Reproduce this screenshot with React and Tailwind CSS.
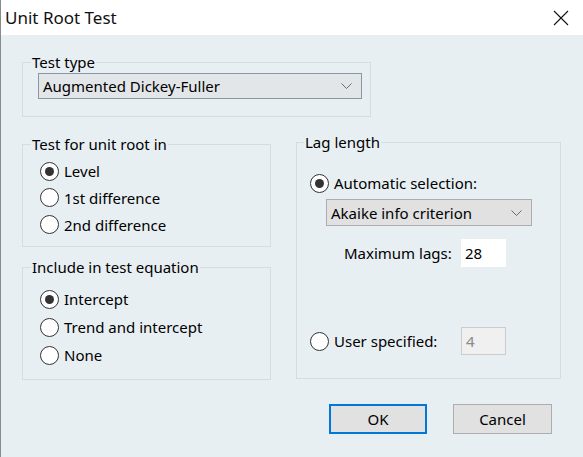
import React from "react";

function Radio({ checked }) {
  return (
    <span className="w-[19px] h-[19px] rounded-full border-[1.5px] border-[#333] bg-white flex items-center justify-center shrink-0">
      {checked && <span className="w-[9px] h-[9px] rounded-full bg-[#333]" />}
    </span>
  );
}

function Chevron() {
  return (
    <svg width="11" height="6" viewBox="0 0 11 6" className="shrink-0">
      <polyline points="0.5,0.5 5.5,5.5 10.5,0.5" fill="none" stroke="#6b6b6b" strokeWidth="1" />
    </svg>
  );
}

function RadioRow({ checked, label, h }) {
  return (
    <div className={`flex items-center gap-[5px] ${h}`}>
      <Radio checked={checked} />
      <span>{label}</span>
    </div>
  );
}

export default function App() {
  return (
    <div className="w-[583px] h-[457px] flex flex-col bg-[#e8eff3] border-l border-[#8a8a8a] font-['Noto_Sans',sans-serif] text-[15px] leading-[20px] text-black overflow-hidden">
      <div className="h-[35px] bg-white flex items-center justify-between pl-[4px] pr-[14px] shrink-0">
        <span className="text-[17px] leading-[24px] text-[#111]">Unit Root Test</span>
        <svg width="16" height="16" viewBox="0 0 16 16">
          <path d="M1 1 L15 15 M15 1 L1 15" stroke="#111" strokeWidth="1.1" fill="none" />
        </svg>
      </div>

      <div className="flex-1 flex flex-col pl-[21px] pt-[17px]">
        <fieldset className="w-[349px] h-[65px] border border-[#d6dde2]">
          <legend className="ml-[8px] px-[1px]">Test type</legend>
          <div className="pl-[15px] pt-[1px]">
            <div className="w-[324px] h-[26px] bg-[#e3e6e9] border border-[#8c97a3] flex items-center justify-between pl-[4px] pr-[9px]">
              <span>Augmented Dickey-Fuller</span>
              <Chevron />
            </div>
          </div>
        </fieldset>

        <div className="flex items-start gap-[25px] mt-[15px]">
          <div className="flex flex-col w-[249px] mt-[2px] gap-[10px]">
            <fieldset className="h-[113px] border border-[#d6dde2]">
              <legend className="ml-[8px] px-[1px]">Test for unit root in</legend>
              <div className="flex flex-col pl-[17px] pt-[4px]">
                <RadioRow checked label="Level" h="h-[26px]" />
                <RadioRow label="1st difference" h="h-[27px]" />
                <RadioRow label="2nd difference" h="h-[27px]" />
              </div>
            </fieldset>
            <fieldset className="h-[123px] border border-[#d6dde2]">
              <legend className="ml-[8px] px-[1px]">Include in test equation</legend>
              <div className="flex flex-col pl-[17px] pt-[8px]">
                <RadioRow checked label="Intercept" h="h-[28px]" />
                <RadioRow label="Trend and intercept" h="h-[28px]" />
                <RadioRow label="None" h="h-[28px]" />
              </div>
            </fieldset>
          </div>

          <fieldset className="w-[265px] h-[247px] border border-[#d6dde2]">
            <legend className="ml-[7px] px-[1px]">Lag length</legend>
            <div className="flex flex-col pl-[13px] pt-[18px]">
              <RadioRow checked label="Automatic selection:" h="h-[26px]" />
              <div className="pl-[16px] mt-[3px]">
                <div className="w-[206px] h-[27px] bg-[#e1e1e1] border border-[#adadad] flex items-center justify-between pl-[4px] pr-[9px]">
                  <span>Akaike info criterion</span>
                  <Chevron />
                </div>
              </div>
              <div className="flex items-center mt-[13px] pl-[34px] gap-[9px]">
                <span className="w-[108px]">Maximum lags:</span>
                <div className="w-[45px] h-[28px] bg-white flex items-center pl-[4px]">28</div>
              </div>
              <div className="flex items-center mt-[60px]">
                <div className="flex items-center gap-[5px] w-[151px]">
                  <Radio />
                  <span>User specified:</span>
                </div>
                <div className="w-[45px] h-[28px] bg-[#f0f0f0] border border-[#cccccc] flex items-center pl-[4px] text-[#8a8a8a]">4</div>
              </div>
            </div>
          </fieldset>
        </div>

        <div className="flex justify-end gap-[26px] pr-[31px] mt-[24px]">
          <button className="w-[98px] h-[30px] bg-[#e1e1e1] border-2 border-[#0078d7] flex items-center justify-center">OK</button>
          <button className="w-[99px] h-[30px] bg-[#e1e1e1] border border-[#adadad] flex items-center justify-center">Cancel</button>
        </div>
      </div>
    </div>
  );
}
